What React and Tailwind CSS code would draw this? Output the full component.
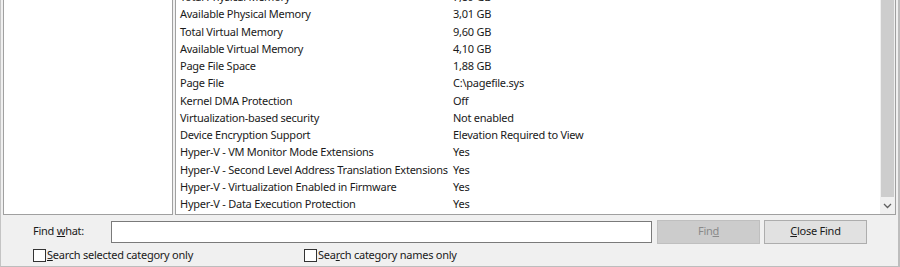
import React from "react";

const rows = [
  ["Total Physical Memory", "7,89 GB"],
  ["Available Physical Memory", "3,01 GB"],
  ["Total Virtual Memory", "9,60 GB"],
  ["Available Virtual Memory", "4,10 GB"],
  ["Page File Space", "1,88 GB"],
  ["Page File", "C:\\pagefile.sys"],
  ["Kernel DMA Protection", "Off"],
  ["Virtualization-based security", "Not enabled"],
  ["Device Encryption Support", "Elevation Required to View"],
  ["Hyper-V - VM Monitor Mode Extensions", "Yes"],
  ["Hyper-V - Second Level Address Translation Extensions", "Yes"],
  ["Hyper-V - Virtualization Enabled in Firmware", "Yes"],
  ["Hyper-V - Data Execution Protection", "Yes"],
];

const App = () => {
  return (
    <div className="w-[900px] h-[267px] bg-[#f0f0f0] flex flex-col overflow-hidden text-[11px] tracking-[-0.25px] text-[#1a1a1a] font-['Noto_Sans','Open_Sans',sans-serif] border-r-2 border-r-[#bdbdbd] border-b border-b-[#bdbdbd] border-l border-l-[#c4c4c4]">
      {/* Panes */}
      <div className="flex h-[217px] pl-[2px] pr-[2px]">
        {/* Category tree */}
        <div className="w-[170px] bg-white border-l border-b border-r border-[#a0a0a0]" />
        {/* Details list */}
        <div className="flex-1 ml-[2px] bg-white border-l border-b border-r border-[#a0a0a0] flex overflow-hidden">
          <div className="flex-1 overflow-hidden">
            <div className="-mt-[12px] pl-[4px]">
              {rows.map((row, i) => (
                <div key={i} className="flex h-[17.25px] leading-[17.25px] whitespace-nowrap">
                  <div className="w-[273px]">{row[0]}</div>
                  <div>{row[1]}</div>
                </div>
              ))}
            </div>
          </div>
          {/* Scrollbar */}
          <div className="w-[15px] bg-[#f0f0f0] flex flex-col items-center">
            <div className="w-[13px] flex-1 bg-[#cdcdcd]" />
            <div className="h-[17px] flex items-center justify-center">
              <svg width="9" height="6" viewBox="0 0 9 6" fill="none" stroke="#606060" strokeWidth="1.3">
                <path d="M1 1l3.5 3.5L8 1" />
              </svg>
            </div>
          </div>
        </div>
      </div>

      {/* Find bar */}
      <div className="flex-1 pl-[32px] pt-[5px]">
        <div className="flex items-center h-[23px]">
          <span className="w-[78px]">
            Find <span className="underline">w</span>hat:
          </span>
          <div className="w-[541px] h-[22px] bg-white border border-[#7a7a7a]" />
          <button className="ml-[5px] w-[103px] h-[24px] bg-[#cccccc] border border-[#bfbfbf] text-[#8a8a8a]">
            Fin<span className="underline">d</span>
          </button>
          <button className="ml-[4px] w-[103px] h-[24px] bg-[#e1e1e1] border border-[#adadad]">
            <span className="underline">C</span>lose Find
          </button>
        </div>
        <div className="flex items-center h-[22px] mt-[1px]">
          <label className="flex items-center w-[271px]">
            <span className="w-[13px] h-[13px] border border-[#333] bg-white mr-[1px]" />
            <span>
              <span className="underline">S</span>earch selected category only
            </span>
          </label>
          <label className="flex items-center">
            <span className="w-[13px] h-[13px] border border-[#333] bg-white mr-[1px]" />
            <span>
              Sea<span className="underline">r</span>ch category names only
            </span>
          </label>
        </div>
      </div>
    </div>
  );
};

export default App;
